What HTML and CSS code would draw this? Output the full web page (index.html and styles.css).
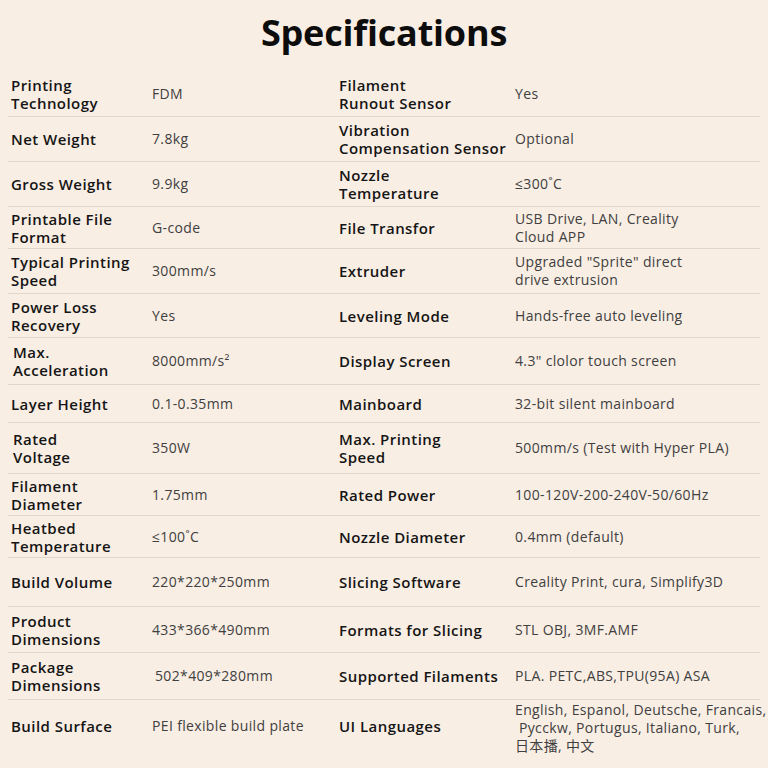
FILE: index.html
```html
<!DOCTYPE html>
<html lang="en">
<head>
<meta charset="utf-8">
<title>Specifications</title>
<link rel="stylesheet" href="styles.css">
</head>
<body>
<main class="page">
  <h1 class="title">Specifications</h1>
  <div class="specs">
    <div class="k">Printing<br>Technology</div><div class="v">FDM</div>
    <div class="k">Filament<br>Runout Sensor</div><div class="v">Yes</div>

    <div class="k">Net Weight</div><div class="v">7.8kg</div>
    <div class="k">Vibration<br>Compensation Sensor</div><div class="v">Optional</div>

    <div class="k">Gross Weight</div><div class="v">9.9kg</div>
    <div class="k">Nozzle<br>Temperature</div><div class="v">≤300˚C</div>

    <div class="k">Printable File<br>Format</div><div class="v">G-code</div>
    <div class="k">File Transfor</div><div class="v">USB Drive, LAN, Creality<br>Cloud APP</div>

    <div class="k">Typical Printing<br>Speed</div><div class="v">300mm/s</div>
    <div class="k">Extruder</div><div class="v">Upgraded "Sprite" direct<br>drive extrusion</div>

    <div class="k">Power Loss<br>Recovery</div><div class="v">Yes</div>
    <div class="k">Leveling Mode</div><div class="v">Hands-free auto leveling</div>

    <div class="k shift">Max.<br>Acceleration</div><div class="v">8000mm/s²</div>
    <div class="k">Display Screen</div><div class="v">4.3" clolor touch screen</div>

    <div class="k">Layer Height</div><div class="v">0.1-0.35mm</div>
    <div class="k">Mainboard</div><div class="v">32-bit silent mainboard</div>

    <div class="k shift">Rated<br>Voltage</div><div class="v">350W</div>
    <div class="k">Max. Printing<br>Speed</div><div class="v">500mm/s (Test with Hyper PLA)</div>

    <div class="k">Filament<br>Diameter</div><div class="v">1.75mm</div>
    <div class="k">Rated Power</div><div class="v">100-120V-200-240V-50/60Hz</div>

    <div class="k">Heatbed<br>Temperature</div><div class="v">≤100˚C</div>
    <div class="k">Nozzle Diameter</div><div class="v">0.4mm (default)</div>

    <div class="k">Build Volume</div><div class="v">220*220*250mm</div>
    <div class="k">Slicing Software</div><div class="v">Creality Print, cura, Simplify3D</div>

    <div class="k">Product<br>Dimensions</div><div class="v">433*366*490mm</div>
    <div class="k">Formats for Slicing</div><div class="v">STL OBJ, 3MF.AMF</div>

    <div class="k">Package<br>Dimensions</div><div class="v shift">502*409*280mm</div>
    <div class="k">Supported Filaments</div><div class="v">PLA. PETC,ABS,TPU(95A) ASA</div>

    <div class="k last">Build Surface</div><div class="v last">PEI flexible build plate</div>
    <div class="k last">UI Languages</div><div class="v last wide">English, Espanol, Deutsche, Francais,<br>&nbsp;Pycckw, Portugus, Italiano, Turk,<br>日本播, 中文</div>
  </div>
</main>
</body>
</html>
```

FILE: styles.css
```css
* { box-sizing: border-box; }

html, body {
  margin: 0;
  padding: 0;
  background: #f9eee4;
}

body {
  font-family: "Open Sans", "Noto Sans CJK SC", sans-serif;
  color: #141414;
}

.page {
  width: 768px;
  height: 768px;
  overflow: hidden;
}

.title {
  margin: 0;
  padding: 11px 0 17px;
  height: 72px;
  font-size: 36px;
  line-height: 44px;
  font-weight: 700;
  text-align: center;
  color: #0d0d0d;
  letter-spacing: -0.2px;
}

.specs {
  margin-left: 8px;
  width: 752px;
  display: grid;
  grid-template-columns: 144px 187px 176px 245px;
  grid-template-rows: 45px 45px 45px 42px 45px 44px 47px 38px 51px 42px 42px 49px 46px 47px 52px;
}

.k, .v {
  display: flex;
  align-items: center;
  border-bottom: 1px solid #e2d6cb;
  white-space: nowrap;
}

.k {
  font-size: 15px;
  line-height: 18px;
  font-weight: 600;
  letter-spacing: 0.45px;
  color: #151515;
}

.v {
  font-size: 14px;
  line-height: 18px;
  font-weight: 400;
  letter-spacing: 0.35px;
  color: #404040;
}

.specs > :nth-child(4n + 1) {
  padding-left: 3px;
}

.specs > :nth-child(4n + 1).shift {
  padding-left: 5px;
}

.v.shift {
  padding-left: 3px;
}

.last {
  border-bottom: none;
}

.wide {
  overflow: visible;
  padding-top: 4px;
}
```
